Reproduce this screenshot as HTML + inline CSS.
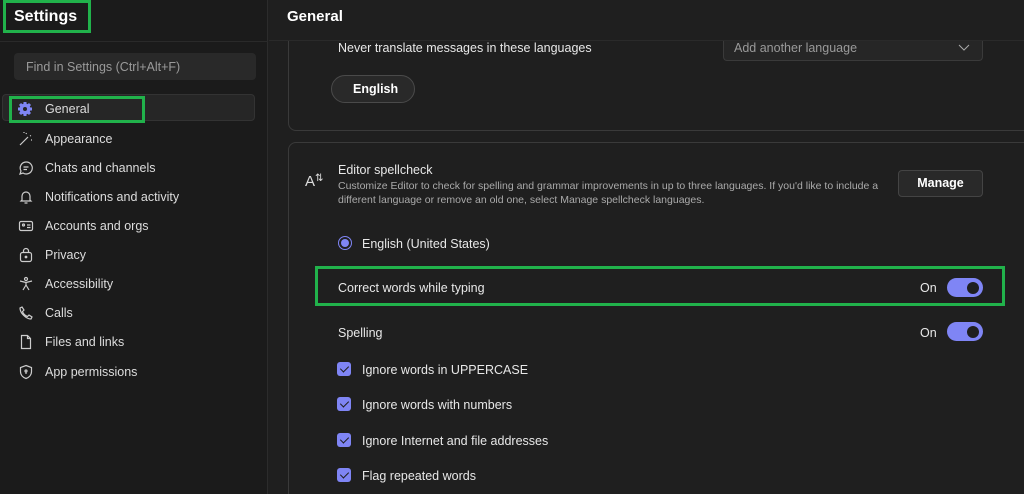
<!DOCTYPE html>
<html><head><style>
*{box-sizing:border-box;margin:0;padding:0}
html,body{width:1024px;height:494px;overflow:hidden}
body{background:#1f1f1f;font-family:"Liberation Sans",sans-serif;color:#fff;position:relative;font-size:13px}
.a{position:absolute}
.side{left:0;top:0;width:268px;height:494px;background:#1b1b1b;border-right:1px solid #2c2c2c}
.hdr{left:269px;top:0;width:755px;height:41px;background:#1f1f1f;border-bottom:1px solid #2a2a2a;z-index:2}
.hline{left:0;top:41px;width:268px;height:1px;background:#2a2a2a}
.green{border:3px solid #21b24b;z-index:3}
.nav{left:18px;font-size:12.5px;color:#ddd;height:16px}
.nav svg{position:absolute;left:0;top:0}
.nav span{position:absolute;left:27px;top:1px;white-space:nowrap}
.card{border:1px solid #3a3a3a;border-radius:8px;background:#1f1f1f}
.t{font-size:12.5px;color:#e8e8e8;white-space:nowrap}
.cb{width:14px;height:14px;border-radius:3px;background:#7f85f5;left:337px}
.cb:after{content:"";position:absolute;left:4.5px;top:2px;width:4px;height:7px;border:solid #1f1f1f;border-width:0 1.5px 1.5px 0;transform:rotate(45deg)}
.tog{width:36px;height:19px;border-radius:10px;background:#7f85f5;left:947px}
.tog:after{content:"";position:absolute;right:4px;top:3.5px;width:12px;height:12px;border-radius:50%;background:#1f1f1f}
</style></head><body>
<div class="a side"></div>
<div class="a hline"></div>
<div class="a green" style="left:3px;top:0;width:88px;height:33px"></div>
<div class="a" style="left:14px;top:8px;font-size:16px;font-weight:bold">Settings</div>
<div class="a" style="left:14px;top:53px;width:242px;height:27px;background:#292929;border-radius:4px"></div>
<div class="a" style="left:26px;top:60px;font-size:12.5px;color:#9a9a9a">Find in Settings (Ctrl+Alt+F)</div>
<div class="a" style="left:2px;top:94px;width:253px;height:27px;background:#262626;border:1px solid #333;border-radius:4px"></div>
<div class="a green" style="left:9px;top:96px;width:136px;height:27px"></div>
<svg class="a" style="left:17px;top:101px" width="16" height="16" viewBox="0 0 16 16"><circle cx="8" cy="8" r="5.5" fill="#7f85f5"/><g stroke="#7f85f5" stroke-width="3"><path d="M8 1v14M1 8h14M3 3l10 10M13 3L3 13"/></g><circle cx="8" cy="8" r="2" fill="#262626"/></svg>
<div class="a nav" style="top:101px"><span>General</span></div>
<div class="a nav" style="top:131px"><svg width="16" height="16" viewBox="0 0 16 16" fill="none" stroke="#ccc" stroke-width="1.2"><path d="M2 14L10 6M8 3l.5-1M12 5l1-.5M13 9h1M6 2V1"/></svg><span>Appearance</span></div>
<div class="a nav" style="top:160px"><svg width="16" height="16" viewBox="0 0 16 16" fill="none" stroke="#ccc" stroke-width="1.2"><path d="M8 2a6 6 0 1 1-3 11l-3 1 1-3A6 6 0 0 1 8 2zM5.5 7h5M5.5 9.5h3.5"/></svg><span>Chats and channels</span></div>
<div class="a nav" style="top:189px"><svg width="16" height="16" viewBox="0 0 16 16" fill="none" stroke="#ccc" stroke-width="1.2"><path d="M4 11V7a4 4 0 0 1 8 0v4l1 1H3zM6.5 14h3"/></svg><span>Notifications and activity</span></div>
<div class="a nav" style="top:218px"><svg width="16" height="16" viewBox="0 0 16 16" fill="none" stroke="#ccc" stroke-width="1.2"><rect x="1.5" y="3.5" width="13" height="9" rx="1.5"/><path d="M9 7h3.5M9 9.5h3.5"/><circle cx="5.5" cy="7" r="1"/></svg><span>Accounts and orgs</span></div>
<div class="a nav" style="top:247px"><svg width="16" height="16" viewBox="0 0 16 16" fill="none" stroke="#ccc" stroke-width="1.2"><rect x="2.5" y="5.5" width="11" height="9" rx="2"/><path d="M5.5 5.5V4a2.5 2.5 0 0 1 5 0v1.5"/><circle cx="8" cy="10" r=".8" fill="#ccc"/></svg><span>Privacy</span></div>
<div class="a nav" style="top:276px"><svg width="16" height="16" viewBox="0 0 16 16" fill="none" stroke="#ccc" stroke-width="1.2"><circle cx="8" cy="3" r="1.5"/><path d="M2 5l6 1.5L14 5M8 6.5V9l-3 5M8 9l3 5"/></svg><span>Accessibility</span></div>
<div class="a nav" style="top:305px"><svg width="16" height="16" viewBox="0 0 16 16" fill="none" stroke="#ccc" stroke-width="1.2"><path d="M4 2l2 3-1.5 1.5a8 8 0 0 0 5 5L11 10l3 2-1 2c-5 0-11-6-11-11z"/></svg><span>Calls</span></div>
<div class="a nav" style="top:334px"><svg width="16" height="16" viewBox="0 0 16 16" fill="none" stroke="#ccc" stroke-width="1.2"><path d="M3.5 1.5h6l3 3v10h-9zM9.5 1.5v3h3"/></svg><span>Files and links</span></div>
<div class="a nav" style="top:364px"><svg width="16" height="16" viewBox="0 0 16 16" fill="none" stroke="#ccc" stroke-width="1.2"><path d="M8 1.5l5.5 2v4c0 3.5-2.5 6-5.5 7-3-1-5.5-3.5-5.5-7v-4z"/><circle cx="8" cy="7" r="1"/><path d="M8 8v2"/></svg><span>App permissions</span></div>

<div class="a card" style="left:288px;top:-10px;width:760px;height:141px"></div>
<div class="a hdr"></div>
<div class="a" style="left:287px;top:8px;font-size:15px;font-weight:bold;z-index:3">General</div>
<div class="a t" style="left:338px;top:41px">Never translate messages in these languages</div>
<div class="a" style="left:723px;top:35px;width:260px;height:26px;background:#262626;border:1px solid #3a3a3a;border-top:none;border-radius:0 0 4px 4px"></div>
<div class="a" style="left:734px;top:41px;font-size:12.5px;color:#9a9a9a">Add another language</div>
<svg class="a" style="left:958px;top:44px" width="12" height="8"><path d="M1 1l5 5 5-5" stroke="#aaa" fill="none"/></svg>
<div class="a" style="left:331px;top:75px;width:84px;height:28px;border:1px solid #4a4a4a;border-radius:14px;background:#292929"></div>
<div class="a" style="left:353px;top:82px;font-size:12.5px;font-weight:bold">English</div>

<div class="a card" style="left:288px;top:142px;width:760px;height:360px"></div>
<div class="a" style="left:305px;top:173px;font-size:15px;color:#ddd">A<span style="font-size:10px;vertical-align:top">⇅</span></div>
<div class="a t" style="left:338px;top:163px">Editor spellcheck</div>
<div class="a" style="left:338px;top:180px;font-size:10.5px;color:#aaa;line-height:13.5px;width:560px">Customize Editor to check for spelling and grammar improvements in up to three languages. If you'd like to include a different language or remove an old one, select Manage spellcheck languages.</div>
<div class="a" style="left:898px;top:170px;width:85px;height:27px;border:1px solid #444;border-radius:4px;background:#292929;text-align:center;line-height:25px;font-weight:bold;font-size:12.5px">Manage</div>
<div class="a" style="left:338px;top:236px;width:14px;height:14px;border-radius:50%;border:1px solid #7f85f5;background:#1f1f1f"></div>
<div class="a" style="left:341px;top:239px;width:8px;height:8px;border-radius:50%;background:#7f85f5"></div>
<div class="a t" style="left:362px;top:237px">English (United States)</div>
<div class="a green" style="left:315px;top:266px;width:690px;height:40px"></div>
<div class="a t" style="left:338px;top:281px">Correct words while typing</div>
<div class="a t" style="left:920px;top:281px">On</div>
<div class="a tog" style="top:278px"></div>
<div class="a t" style="left:338px;top:326px">Spelling</div>
<div class="a t" style="left:920px;top:326px">On</div>
<div class="a tog" style="top:322px"></div>
<div class="a cb" style="top:362px"></div><div class="a t" style="left:362px;top:363px">Ignore words in UPPERCASE</div>
<div class="a cb" style="top:397px"></div><div class="a t" style="left:362px;top:398px">Ignore words with numbers</div>
<div class="a cb" style="top:433px"></div><div class="a t" style="left:362px;top:434px">Ignore Internet and file addresses</div>
<div class="a cb" style="top:468px"></div><div class="a t" style="left:362px;top:469px">Flag repeated words</div>
</body></html>
